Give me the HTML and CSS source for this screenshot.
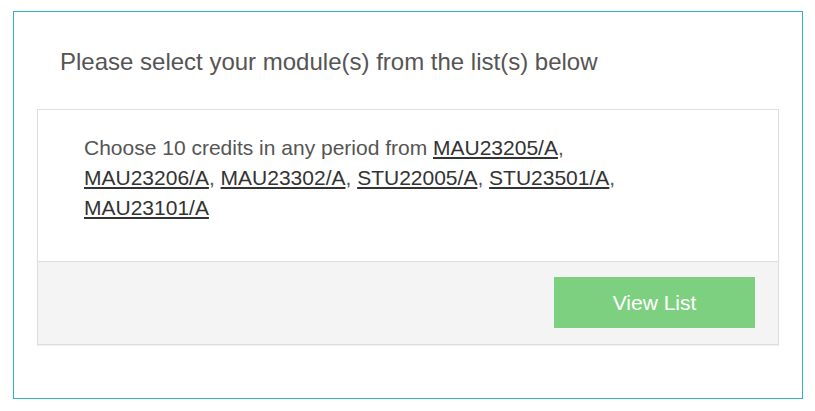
FILE: index.html
```html
<!DOCTYPE html>
<html>
<head>
<meta charset="utf-8">
<link rel="stylesheet" href="styles.css">
</head>
<body>
<div class="frame">
  <h1 class="title">Please select your module(s) from the list(s) below</h1>
  <div class="panel">
    <div class="panel-body">
      <p class="rule">Choose 10 credits in any period from <a href="#">MAU23205/A</a>, <a href="#">MAU23206/A</a>, <a href="#">MAU23302/A</a>, <a href="#">STU22005/A</a>, <a href="#">STU23501/A</a>, <a href="#">MAU23101/A</a></p>
    </div>
    <div class="panel-footer">
      <button class="btn">View List</button>
    </div>
  </div>
</div>
</body>
</html>
```

FILE: styles.css
```css
html, body {
  margin: 0;
  padding: 0;
  background: #fff;
}
body {
  padding: 11px 12px 12px 13px;
  font-family: "Liberation Sans", Arial, sans-serif;
}
.frame {
  border: 1px solid #30b3c6;
  padding: 0 23px;
  box-sizing: border-box;
  width: 790px;
  height: 388px;
}
.title {
  margin: 0;
  padding: 35px 0 0 23px;
  height: 97px;
  box-sizing: border-box;
  font-size: 24px;
  font-weight: normal;
  color: #555;
  line-height: 30px;
}
.panel {
  border: 1px solid #ddd;
  box-shadow: 0 1px 1px rgba(0,0,0,0.05);
}
.panel-body {
  padding: 23px 120px 0 46px;
  height: 151px;
  box-sizing: border-box;
}
.rule {
  margin: 0;
  font-size: 21px;
  line-height: 30px;
  color: #555;
}
.rule a {
  color: #333;
  text-decoration: underline;
}
.panel-footer {
  background: #f4f4f4;
  border-top: 1px solid #ddd;
  padding: 15px 23px 16px;
  display: flex;
  justify-content: flex-end;
}
.btn {
  width: 201px;
  height: 51px;
  border: 0;
  background: #7dd07f;
  color: #fff;
  font-family: "Liberation Sans", Arial, sans-serif;
  font-size: 21px;
  padding: 0;
}
```
